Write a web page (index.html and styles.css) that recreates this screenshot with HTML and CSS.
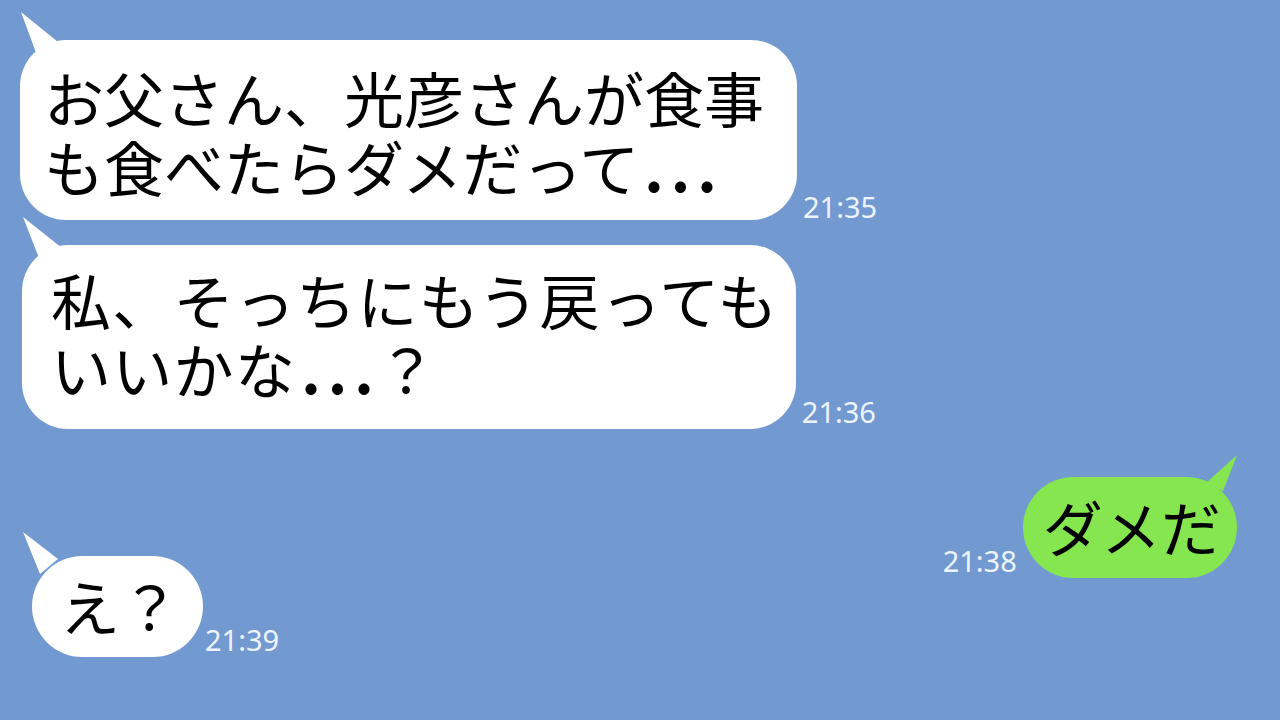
FILE: index.html
```html
<!DOCTYPE html>
<html lang="ja">
<head>
    <meta charset="UTF-8">
    <meta name="viewport" content="width=device-width, initial-scale=1.0">
    <title>トーク</title>
    <link rel="stylesheet" href="styles.css">
</head>
<body>

    <div class="chat">
        <div class="row row-in first">
            <div class="bubble in tail-a">お父さん、光彦さんが食事<br>も食べたらダメだって<span class="dots">...</span></div>
            <span class="time time-low">21:35</span>
        </div>

        <div class="row row-in second">
            <div class="bubble in tail-b wide">私、そっちにもう戻っても<br>いいかな<span class="dots">...</span>？</div>
            <span class="time">21:36</span>
        </div>

        <div class="row row-out third">
            <span class="time">21:38</span>
            <div class="bubble out short green-pad">ダメだ</div>
        </div>

        <div class="row row-in fourth">
            <div class="bubble in short tail-c">え？</div>
            <span class="time">21:39</span>
        </div>
    </div>

</body>
</html>
```

FILE: styles.css
```css
body {
    margin: 0;
    height: 720px;
    overflow: hidden;
    background-color: #7399d1;
    font-family: "Noto Sans CJK JP", "Noto Sans", sans-serif;
}
.chat {
    display: flex;
    flex-direction: column;
    padding-top: 40px;
}
.row {
    display: flex;
    align-items: flex-end;
    gap: 6px;
}
.row-in {
    justify-content: flex-start;
}
.row-out {
    justify-content: flex-end;
    padding-right: 43px;
}
.first {
    padding-left: 20px;
}
.second {
    padding-left: 22px;
    margin-top: 25px;
}
.third {
    margin-top: 48px;
}
.fourth {
    padding-left: 32px;
    margin-top: -22px;
    gap: 2px;
}
.bubble {
    position: relative;
    font-size: 60px;
    line-height: 69px;
    color: #000;
    white-space: nowrap;
}
.in {
    background-color: #fff;
    border-radius: 46px;
    padding: 22px 33px 20px 24px;
}
.wide {
    letter-spacing: 1.3px;
    padding: 19px 17px 27px 29px;
}
.dots {
    font-weight: 700;
    letter-spacing: 7px;
    margin-left: 5px;
    margin-right: -4px;
}
.short {
    border-radius: 51px;
    padding: 14px 23px 18px 28px;
}
.out {
    background-color: #86e650;
}
.green-pad {
    padding: 14px 16px 18px 20px;
}
/* tails */
.bubble::before {
    content: "";
    position: absolute;
    background: inherit;
}
.tail-a::before {
    left: 0;
    top: -28px;
    width: 40px;
    height: 46px;
    clip-path: polygon(1px 0, 38px 30px, 18px 46px);
}
.tail-b::before {
    left: 0;
    top: -28px;
    width: 42px;
    height: 46px;
    clip-path: polygon(1px 0, 40px 31px, 19px 46px);
}
.tail-c::before {
    left: -9px;
    top: -24px;
    width: 36px;
    height: 42px;
    clip-path: polygon(0 0, 35px 27px, 17px 42px);
}
.out::before {
    right: -1px;
    top: -22px;
    width: 32px;
    height: 36px;
    clip-path: polygon(31px 0, 17px 36px, 0 28px);
}
.time {
    font-family: "Noto Sans", "Liberation Sans", sans-serif;
    font-size: 29px;
    line-height: 1;
    color: #eef4ff;
    margin-bottom: 3px;
}
.time-low {
    margin-bottom: -1px;
}
```
